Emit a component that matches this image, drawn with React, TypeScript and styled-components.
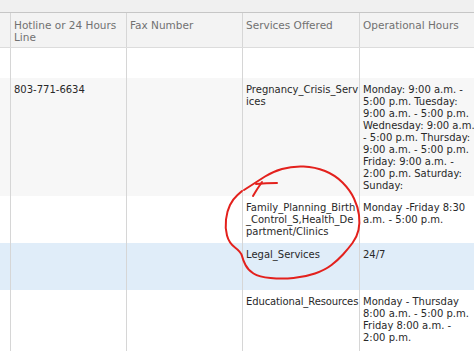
import React from "react";
import styled, { createGlobalStyle } from "styled-components";

const GlobalStyle = createGlobalStyle`
  html, body {
    margin: 0;
    padding: 0;
    background: #ffffff;
  }
  body {
    font-family: "DejaVu Sans", Verdana, sans-serif;
    overflow: hidden;
  }
`;

const COLS = "10px 116px 116px 117px 160px";

const tones: Record<string, string> = {
  white: "#ffffff",
  gray: "#f7f7f7",
  blue: "#e0edf9",
};

interface Resource {
  hotline: string;
  fax: string;
  service: string;
  hours: string;
  tone: "white" | "gray" | "blue";
  height?: number;
  tight?: boolean;
}

const resources: Resource[] = [
  { hotline: "", fax: "", service: "", hours: "", tone: "white", height: 30 },
  {
    hotline: "803-771-6634",
    fax: "",
    service: "Pregnancy_Crisis_Services",
    hours:
      "Monday: 9:00 a.m. - 5:00 p.m. Tuesday: 9:00 a.m. - 5:00 p.m. Wednesday: 9:00 a.m. - 5:00 p.m. Thursday: 9:00 a.m. - 5:00 p.m. Friday: 9:00 a.m. - 2:00 p.m. Saturday: Sunday:",
    tone: "gray",
    height: 118,
  },
  {
    hotline: "",
    fax: "",
    service: "Family_Planning_Birth_Control_S,Health_Department/Clinics",
    hours: "Monday -Friday 8:30 a.m. - 5:00 p.m.",
    tone: "white",
    height: 47,
  },
  { hotline: "", fax: "", service: "Legal_Services", hours: "24/7", tone: "blue", height: 47 },
  {
    hotline: "",
    fax: "",
    service: "Educational_Resources",
    hours: "Monday - Thursday 8:00 a.m. - 5:00 p.m. Friday 8:00 a.m. - 2:00 p.m.",
    tone: "white",
    height: 70,
    tight: true,
  },
];

// hand drawn red loop, points traced from the screenshot
const loop: [number, number][] = [
  [244, 190], [258, 181], [272, 172], [292, 166], [315, 167], [335, 175],
  [350, 190], [358, 207], [360, 223], [357, 237], [348, 249], [338, 260],
  [325, 270], [305, 277], [282, 279], [259, 277], [248, 270], [243, 260],
  [241, 252], [229, 243], [225, 228], [227, 211], [233, 199], [242, 191],
];

function smoothPath(pts: [number, number][]) {
  let d = `M${pts[0][0]},${pts[0][1]}`;
  for (let i = 1; i < pts.length - 1; i++) {
    const [x, y] = pts[i];
    const mx = (x + pts[i + 1][0]) / 2;
    const my = (y + pts[i + 1][1]) / 2;
    d += ` Q${x},${y} ${mx},${my}`;
  }
  const last = pts[pts.length - 1];
  d += ` L${last[0]},${last[1]}`;
  return d;
}

const Page = styled.div`
  position: relative;
  width: 474px;
  height: 351px;
  overflow: hidden;
`;

const TopBand = styled.div`
  height: 12px;
  background: #f0f0f0;
  border-bottom: 1px solid #c6c6c6;
`;

const Grid = styled.div`
  display: flex;
  flex-direction: column;
  width: max-content;
`;

const HeaderRow = styled.div`
  display: grid;
  grid-template-columns: ${COLS};
  height: 35px;
  box-sizing: border-box;
  background: #f3f3f3;
  border-bottom: 1px solid #dcdcdc;
`;

const HeadCell = styled.div`
  box-sizing: border-box;
  border-left: 1px solid #d6d6d6;
  padding: 6px 0 0 3px;
  font-size: 10.5px;
  line-height: 12px;
  color: #717171;

  &:first-child {
    border-left: none;
  }
`;

const Row = styled.div<{ $tone: string; $h?: number }>`
  display: grid;
  grid-template-columns: ${COLS};
  height: ${(p) => (p.$h ? `${p.$h}px` : "auto")};
  background: ${(p) => tones[p.$tone]};
`;

const Cell = styled.div<{ $tight?: boolean }>`
  box-sizing: border-box;
  border-left: 1px solid #d6d6d6;
  padding: 6px 0 0 3px;
  font-size: 10px;
  line-height: 12px;
  color: #292929;
  word-break: break-all;
  white-space: ${(p) => (p.$tight ? "nowrap" : "normal")};
  letter-spacing: ${(p) => (p.$tight ? "-0.12px" : "normal")};

  &:first-child {
    border-left: none;
  }
`;

const HoursCell = styled(Cell)`
  word-break: normal;
  padding-right: 43px;
`;

const Scribble = styled.svg`
  position: absolute;
  left: 0;
  top: 0;
  pointer-events: none;
`;

const App: React.FC = () => {
  return (
    <Page>
      <GlobalStyle />
      <TopBand />
      <Grid>
        <HeaderRow>
          <HeadCell />
          <HeadCell>Hotline or 24 Hours Line</HeadCell>
          <HeadCell>Fax Number</HeadCell>
          <HeadCell>Services Offered</HeadCell>
          <HeadCell>Operational Hours</HeadCell>
        </HeaderRow>
        {resources.map((r, i) => (
          <Row key={i} $tone={r.tone} $h={r.height}>
            <Cell />
            <Cell>{r.hotline}</Cell>
            <Cell>{r.fax}</Cell>
            <Cell $tight={r.tight}>{r.service}</Cell>
            <HoursCell>{r.hours}</HoursCell>
          </Row>
        ))}
      </Grid>
      <Scribble width="474" height="351" viewBox="0 0 474 351">
        <g fill="none" stroke="#e3211d" strokeWidth="2" strokeLinecap="round" strokeLinejoin="round">
          <path d={smoothPath(loop)} />
          <path d="M277,183 Q266,183 256,184" />
          <path d="M253,196 Q257,189 262,182" />
        </g>
      </Scribble>
    </Page>
  );
};

export default App;
